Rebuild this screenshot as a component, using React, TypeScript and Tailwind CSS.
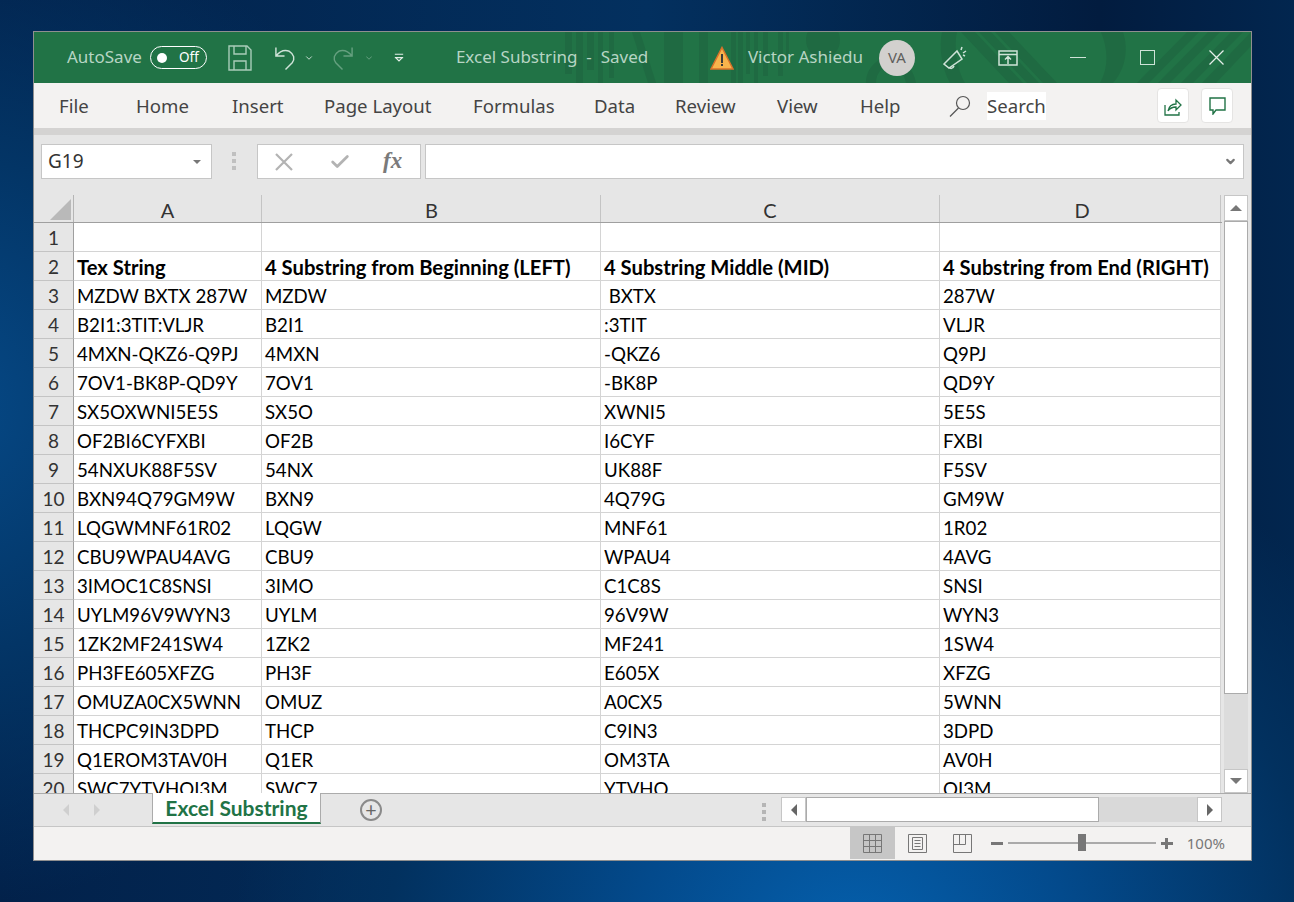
import { ChevronDown, Check } from 'lucide-react';

const rows: string[][] = [
  ['', '', '', ''],
  ['Tex String', '4 Substring from Beginning (LEFT)', '4 Substring Middle (MID)', '4 Substring from End (RIGHT)'],
  ['MZDW BXTX 287W', 'MZDW', '\u00a0BXTX', '287W'],
  ['B2I1:3TIT:VLJR', 'B2I1', ':3TIT', 'VLJR'],
  ['4MXN-QKZ6-Q9PJ', '4MXN', '-QKZ6', 'Q9PJ'],
  ['7OV1-BK8P-QD9Y', '7OV1', '-BK8P', 'QD9Y'],
  ['SX5OXWNI5E5S', 'SX5O', 'XWNI5', '5E5S'],
  ['OF2BI6CYFXBI', 'OF2B', 'I6CYF', 'FXBI'],
  ['54NXUK88F5SV', '54NX', 'UK88F', 'F5SV'],
  ['BXN94Q79GM9W', 'BXN9', '4Q79G', 'GM9W'],
  ['LQGWMNF61R02', 'LQGW', 'MNF61', '1R02'],
  ['CBU9WPAU4AVG', 'CBU9', 'WPAU4', '4AVG'],
  ['3IMOC1C8SNSI', '3IMO', 'C1C8S', 'SNSI'],
  ['UYLM96V9WYN3', 'UYLM', '96V9W', 'WYN3'],
  ['1ZK2MF241SW4', '1ZK2', 'MF241', '1SW4'],
  ['PH3FE605XFZG', 'PH3F', 'E605X', 'XFZG'],
  ['OMUZA0CX5WNN', 'OMUZ', 'A0CX5', '5WNN'],
  ['THCPC9IN3DPD', 'THCP', 'C9IN3', '3DPD'],
  ['Q1EROM3TAV0H', 'Q1ER', 'OM3TA', 'AV0H'],
  ['SWC7YTVHQI3M', 'SWC7', 'YTVHQ', 'QI3M'],
];

const menu = [
  ['File', 'w-[102px] pl-[25px]'],
  ['Home', 'w-[96px]'],
  ['Insert', 'w-[92px]'],
  ['Page Layout', 'w-[149px]'],
  ['Formulas', 'w-[121px]'],
  ['Data', 'w-[81px]'],
  ['Review', 'w-[102px]'],
  ['View', 'w-[83px]'],
  ['Help', 'w-[89px]'],
];

const colWidths = ['w-[188px]', 'w-[339px]', 'w-[339px]', 'w-[281px]'];
const headPad = ['', 'pl-[1px]', '', 'pl-[4px]'];

// dark stripes behind the title bar, x is relative to the window
function TitlePattern() {
  return (
    <svg className="absolute inset-0 h-full w-full" viewBox="0 0 1217 51">
      <g fill="#1f6a42">
        <rect x="531" y="0" width="7" height="42" />
        <rect x="542" y="0" width="7" height="51" />
        <rect x="553" y="0" width="7" height="38" />
        <rect x="564" y="0" width="5" height="51" />
        <rect x="575" y="0" width="5" height="46" />
        <path d="M598 0h8l16 51h-8z" />
        <rect x="630" y="0" width="19" height="51" />
        <rect x="665" y="0" width="9" height="51" />
        <rect x="697" y="0" width="5" height="51" />
        <rect x="704" y="0" width="5" height="51" />
        <rect x="712" y="0" width="4" height="42" />
        <rect x="720" y="0" width="4" height="51" />
        <rect x="729" y="0" width="5" height="44" />
        <rect x="744" y="0" width="5" height="44" />
        <rect x="752" y="0" width="3" height="30" />
        <ellipse cx="789" cy="8" rx="17" ry="18" />
        <path d="M832 51c0-14 10-24 24-28 12 2 24 14 26 28h-10c-2-10-8-18-16-18-8 2-14 8-14 18z" />
        <path d="M908 0h15c-3 12-1 36 8 51h-15c-9-16-11-38-8-51z" />
        <path d="M927 0h14l48 51h-14zM945 0h12l48 51h-12zM961 0h14l48 51h-14z" />
        <path d="M1067 0h22c6 18 2 38-10 51h-13c9-16 8-34 1-51z" />
        <path d="M1103 51l50-51h12l-50 51zM1124 51l50-51h12l-50 51zM1147 51l50-51h12l-50 51zM1168 51l49-51h0v14l-35 37z" />
      </g>
    </svg>
  );
}

function QuickAccess() {
  return (
    <div className="flex items-center text-[#a9cdb9]">
      <svg className="ml-[21px]" width="24" height="26" viewBox="0 0 24 26" fill="none" stroke="currentColor" strokeWidth="1.4">
        <path d="M1 1h18l4 4v20H1z" />
        <path d="M6 1v8h12V1M6 25v-9h12v9" />
      </svg>
      <svg className="ml-[22px]" width="23" height="26" viewBox="0 0 24 26" fill="none" stroke="#cfe3d8" strokeWidth="1.5">
        <path d="M2 2v9h9M2 11c4-5 9-7 14-5 5 3 6 8 3 12l-7 7" />
      </svg>
      <ChevronDown className="ml-[7px] text-[#e4efe9]" size={10} strokeWidth={2} />
      <svg className="ml-[17px] opacity-50" width="23" height="26" viewBox="0 0 24 26" fill="none" stroke="#a9cdb9" strokeWidth="1.5">
        <path d="M22 2v9h-9M22 11c-4-5-9-7-14-5-5 3-6 8-3 12l7 7" />
      </svg>
      <ChevronDown className="ml-[10px] opacity-60" size={10} strokeWidth={2} />
      <svg className="ml-[20px]" width="10" height="10" viewBox="0 0 12 12" fill="none" stroke="#e4efe9" strokeWidth="1.4">
        <path d="M1 1.5h10M2 5.5l4 4 4-4M1 5.5h10" />
      </svg>
    </div>
  );
}

function TitleBar() {
  return (
    <div className="relative flex h-[51px] shrink-0 items-center bg-[#217346] text-[#b7d5c4]">
      <TitlePattern />
      <div className="relative flex w-full items-center">
        <span className="mb-[2px] ml-[33px] text-[17px]">AutoSave</span>
        <div className="ml-[8px] flex h-[23px] w-[57px] items-center rounded-full border border-white px-[6px] text-[13.5px] text-white">
          <span className="h-[10px] w-[10px] rounded-full bg-white" />
          <span className="ml-[12px]">Off</span>
        </div>
        <QuickAccess />
        <span className="mb-[2px] ml-[52px] w-[254px] whitespace-pre text-[17px]">Excel Substring  -  Saved</span>
        <svg width="24" height="24" viewBox="0 0 24 24">
          <path d="M12 1.5L23 23H1z" fill="#f8b44c" stroke="#d9722a" strokeWidth="1.5" />
          <rect x="11" y="8" width="2" height="9" fill="#3b3b3b" />
          <rect x="11" y="18" width="2" height="2" fill="#3b3b3b" />
        </svg>
        <span className="mb-[2px] ml-[14px] w-[131px] text-[17px]">Victor Ashiedu</span>
        <div className="flex h-[36px] w-[36px] items-center justify-center rounded-full bg-[#d2d0ce] text-[15px] text-[#605e5c]">VA</div>
        <svg className="ml-[28px]" width="24" height="24" viewBox="0 0 24 24" fill="none" stroke="#cfe3d8" strokeWidth="1.5">
          <path d="M1 18L14 5l5 8-13 9zM6 21c1 2 4 2 5-1M19 1l-1 3M23 5l-3 2M22 10l-2-1" />
        </svg>
        <svg className="ml-[31px]" width="20" height="16" viewBox="0 0 20 16" fill="none" stroke="#cfe3d8" strokeWidth="1.5">
          <path d="M1 1h18v14H1zM1 4.500h18M10 14V7M7 9.500l3-3 3 3" />
        </svg>
        <span className="ml-[52px] h-[1.500px] w-[16px] bg-[#cfe3d8]" />
        <span className="ml-[54px] h-[15px] w-[15px] border-[1.500px] border-[#cfe3d8]" />
        <svg className="ml-[54px]" width="15" height="15" viewBox="0 0 15 15" fill="none" stroke="#e4efe9" strokeWidth="1.3">
          <path d="M.5.500l14 14M14.500.500l-14 14" />
        </svg>
      </div>
    </div>
  );
}

function MenuBar() {
  return (
    <div className="flex h-[45px] shrink-0 items-center bg-[#f3f2f1] text-[18.6px] text-[#444444]">
      {menu.map(([label, w]) => (
        <span key={label} className={`${w} mt-[1px]`}>{label}</span>
      ))}
      <svg width="22" height="22" viewBox="0 0 22 22" fill="none" stroke="#555555" strokeWidth="1.2">
        <circle cx="14" cy="8" r="6.5" />
        <path d="M9.500 13L1 21.500" />
      </svg>
      <span className="ml-[16px] mt-[1px] bg-white text-[#444444]">Search</span>
      <div className="ml-auto mr-[18px] flex gap-[12px]">
        <div className="flex h-[35px] w-[32px] items-center justify-center rounded-[4px] border border-[#e5e4e3] bg-white">
          <svg className="mt-[2px]" width="18" height="18" viewBox="0 0 18 18" fill="none" stroke="#217346" strokeWidth="1.3">
            <path d="M1 7v10h14v-3M4 13c1-5 4-7 8-7V2l5 5-5 5V9c-3 0-6 1-8 4z" />
          </svg>
        </div>
        <div className="flex h-[35px] w-[32px] items-center justify-center rounded-[4px] border border-[#e5e4e3] bg-white">
          <svg width="17" height="18" viewBox="0 0 17 18" fill="none" stroke="#217346" strokeWidth="1.4">
            <path d="M1 1h15v12H7l-3 4v-4H1z" />
          </svg>
        </div>
      </div>
    </div>
  );
}

function FormulaBar() {
  return (
    <>
      <div className="h-[7px] shrink-0 bg-[#d4d3d2]" />
      <div className="flex h-[60px] shrink-0 items-start bg-[#e6e6e6] pl-[7px] pt-[9px]">
        <div className="flex h-[35px] w-[171px] items-center justify-between border border-[#c6c6c6] bg-white pl-[6px] pr-[10px] text-[19px] text-[#333333]">
          G19
          <span className="h-0 w-0 border-x-[4px] border-t-[4px] border-x-transparent border-t-[#777777]" />
        </div>
        <div className="ml-[20px] mt-[8px] flex flex-col gap-[3px]">
          <span className="h-[4px] w-[4px] bg-[#c0c0c0]" />
          <span className="h-[4px] w-[4px] bg-[#c0c0c0]" />
          <span className="h-[4px] w-[4px] bg-[#c0c0c0]" />
        </div>
        <div className="ml-[21px] flex h-[35px] w-[164px] items-center border border-[#c6c6c6] bg-white pl-[17px]">
          <svg width="18" height="18" viewBox="0 0 18 18" fill="none" stroke="#b3b3b3" strokeWidth="2.2">
            <path d="M1 1l16 16M17 1L1 17" />
          </svg>
          <Check className="ml-[36px] text-[#b3b3b3]" size={22} strokeWidth={3} />
          <span className="ml-[32px] font-['Liberation_Serif',serif] text-[23px] font-bold italic text-[#7a7a7a]">fx</span>
        </div>
        <div className="ml-[4px] flex h-[35px] w-[819px] items-center justify-end border border-[#c6c6c6] bg-white pr-[6px]">
          <ChevronDown className="text-[#777777]" size={13} strokeWidth={4} />
        </div>
      </div>
    </>
  );
}

function Sheet() {
  return (
    <div className="flex h-[598px] shrink-0 overflow-hidden bg-[#e6e6e6]">
      <div className="h-[598px] w-[1188px] shrink-0 overflow-hidden">
        <div className="flex h-[28px] border-b border-[#9f9f9f] font-['Lato',sans-serif] text-[20px] leading-[30px] text-[#333333]">
          <div className="relative w-[40px] border-r border-[#b5b5b5]">
            <span className="absolute bottom-[2px] right-[2px] h-0 w-0 border-b-[21px] border-l-[21px] border-b-[#b9b9b9] border-l-transparent" />
          </div>
          {['A', 'B', 'C', 'D'].map((c, i) => (
            <div key={c} className={`${colWidths[i]} ${headPad[i]} border-r border-[#c4c4c4] text-center`}>{c}</div>
          ))}
        </div>
        {rows.map((row, r) => (
          <div key={r} className="flex h-[29px] shrink-0">
            <div className="w-[40px] border-b border-r border-b-[#c4c4c4] border-r-[#9f9f9f] text-center font-['Lato',sans-serif] text-[19px] leading-[29px] text-[#333333]">
              {r + 1}
            </div>
            {row.map((cell, c) => (
              <div
                key={c}
                className={`${colWidths[c]} overflow-hidden whitespace-nowrap border-b border-r border-[#d4d4d4] bg-white pl-[3px] font-['Lato',sans-serif] leading-[30px] text-black ${r === 1 ? 'text-[20.2px] font-bold' : 'text-[18.7px]'}`}
              >
                {cell}
              </div>
            ))}
          </div>
        ))}
      </div>
      <div className="ml-[2px] flex w-[24px] flex-col">
        <div className="flex h-[26px] items-center justify-center border border-[#c6c6c6] bg-white">
          <span className="h-0 w-0 border-x-[6px] border-b-[6px] border-x-transparent border-b-[#777777]" />
        </div>
        <div className="h-[473px] border border-[#ababab] bg-white" />
        <div className="h-[75px] bg-[#dcdcdc]" />
        <div className="flex h-[24px] items-center justify-center border border-[#c6c6c6] bg-white">
          <span className="h-0 w-0 border-x-[6px] border-t-[6px] border-x-transparent border-t-[#777777]" />
        </div>
      </div>
    </div>
  );
}

function TabStrip() {
  return (
    <div className="flex h-[34px] shrink-0 items-start border-y border-[#ababab] border-b-[#c6c6c6] bg-[#e6e6e6]">
      <div className="flex h-[32px] w-[118px] items-center gap-[25px] pl-[29px]">
        <span className="h-0 w-0 border-y-[6px] border-r-[6px] border-y-transparent border-r-[#cfcfcf]" />
        <span className="h-0 w-0 border-y-[6px] border-l-[6px] border-y-transparent border-l-[#cfcfcf]" />
      </div>
      <div className="-mt-px h-[31px] w-[169px] border-x border-b-2 border-x-[#ababab] border-b-[#217346] bg-white text-center font-['Lato',sans-serif] text-[21px] font-bold leading-[29px] text-[#217346]">
        Excel Substring
      </div>
      <div className="ml-[39px] mt-[5px] flex h-[22px] w-[22px] items-center justify-center rounded-full border-2 border-[#8a8a8a] text-[20px] leading-none text-[#666666]">
        +
      </div>
      <div className="ml-[380px] mt-[9px] flex flex-col gap-[3px]">
        <span className="h-[4px] w-[4px] bg-[#b5b5b5]" />
        <span className="h-[4px] w-[4px] bg-[#b5b5b5]" />
        <span className="h-[4px] w-[4px] bg-[#b5b5b5]" />
      </div>
      <div className="ml-[15px] mt-[3px] flex h-[25px] w-[441px] bg-[#d9d9d9]">
        <div className="flex w-[25px] items-center justify-center border border-[#c6c6c6] bg-white">
          <span className="h-0 w-0 border-y-[6px] border-r-[6px] border-y-transparent border-r-[#666666]" />
        </div>
        <div className="w-[293px] border border-[#ababab] bg-white" />
        <div className="ml-auto flex w-[25px] items-center justify-center border border-[#c6c6c6] bg-white">
          <span className="h-0 w-0 border-y-[6px] border-l-[6px] border-y-transparent border-l-[#666666]" />
        </div>
      </div>
    </div>
  );
}

function StatusBar() {
  return (
    <div className="flex h-[32px] shrink-0 items-center justify-end bg-[#f3f2f1] text-[#777777]">
      <div className="flex h-full w-[45px] items-center justify-center bg-[#c6c6c6]">
        <svg width="19" height="19" viewBox="0 0 19 19" fill="none" stroke="#777777">
          <path d="M.5.5h18v18H.5zM.5 6.5h18M.5 12.5h18M6.5.5v18M12.5.5v18" />
        </svg>
      </div>
      <svg className="ml-[13px]" width="19" height="19" viewBox="0 0 19 19" fill="none" stroke="#777777">
        <path d="M.5.5h18v18H.5zM4.5 3.5h10v12h-10zM6.5 6.5h6M6.5 9.5h6M6.5 12.5h6" />
      </svg>
      <svg className="ml-[26px]" width="19" height="19" viewBox="0 0 19 19" fill="none" stroke="#777777">
        <path d="M.5.5h18v18H.5zM.5 10.5h12M6.5.5v10M12.5.5v10" />
      </svg>
      <span className="ml-[19px] h-[3px] w-[12px] bg-[#777777]" />
      <div className="relative ml-[5px] h-[2px] w-[148px] bg-[#aaaaaa]">
        <span className="absolute -top-[8px] left-[70px] h-[17px] w-[8px] bg-[#777777]" />
      </div>
      <span className="relative ml-[5px] h-[3px] w-[12px] bg-[#777777]">
        <span className="absolute -top-[4px] left-[4px] h-[11px] w-[3px] bg-[#777777]" />
      </span>
      <span className="ml-[14px] mr-[26px] text-[15px]">100%</span>
    </div>
  );
}

export default function App() {
  return (
    <div className="h-[902px] w-[1294px] overflow-hidden bg-[#02244f] bg-[radial-gradient(ellipse_620px_560px_at_66%_105%,#0560ad_0%,#034a8c_35%,#02315f_75%,transparent_100%),radial-gradient(ellipse_520px_500px_at_-5%_45%,#064a88_0%,#033566_50%,transparent_100%),linear-gradient(90deg,#02214a_0%,#03305f_50%,#021c3f_85%,#02264f_100%)] pl-[33px] pt-[31px] font-['Noto_Sans','Open_Sans',sans-serif]">
      <div className="flex h-[830px] w-[1219px] flex-col overflow-hidden border border-[#8f8f8f] bg-[#f3f2f1]">
        <TitleBar />
        <MenuBar />
        <FormulaBar />
        <Sheet />
        <TabStrip />
        <StatusBar />
      </div>
    </div>
  );
}
